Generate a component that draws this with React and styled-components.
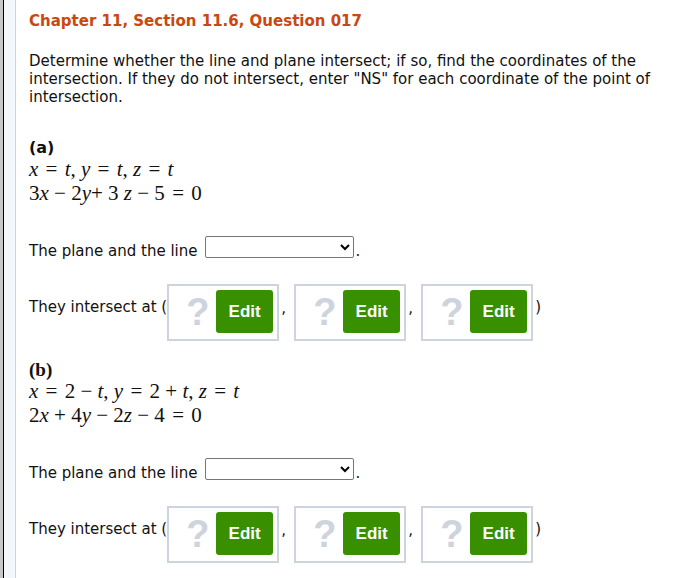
import styled, { createGlobalStyle } from "styled-components"

const Global = createGlobalStyle`
    html, body {
        margin: 0;
        padding: 0;
        background: #ffffff;
    }
`

const Shell = styled.div`
    display: flex;
    min-height: 578px;
`

const Gutter = styled.div`
    width: 3px;
    background: #c8c8c8;
    border-right: 1px solid #000000;
`

const Rail = styled.div`
    width: 11px;
    background: #f3f6fb;
    border-right: 1px solid #ccd3e3;
`

const Content = styled.div`
    flex: 1;
    padding: 12px 0 0 13px;
    font-family: "DejaVu Sans", Verdana, sans-serif;
    font-size: 15px;
    color: #111111;
`

const Title = styled.h1`
    margin: 0;
    font-size: 15px;
    line-height: 18px;
    font-weight: bold;
    color: #c9480f;
`

const Prompt = styled.p`
    margin: 22px 0 0;
    line-height: 18px;
`

const Part = styled.section`
    margin-top: ${({$gap}) => $gap}px;
`

const PartLabel = styled.div`
    font-family: ${({$serif}) => ($serif ? `"Liberation Serif", "Times New Roman", serif` : `"DejaVu Sans", Verdana, sans-serif`)};
    font-size: ${({$serif}) => ($serif ? "19px" : "16px")};
    font-weight: bold;
    line-height: 18px;
`

const MathLine = styled.div`
    font-family: "Liberation Serif", "Times New Roman", serif;
    font-size: 21px;
    line-height: 24px;
    white-space: pre;
`

const V = styled.i`
    font-style: italic;
`

const Eq = styled.span`
    margin: 0 2px;
`

const SelectRow = styled.div`
    margin-top: 31px;
    line-height: 18px;
    display: flex;
    align-items: flex-end;
`

const Choice = styled.select`
    width: 149px;
    height: 22px;
    margin: 0 0 2px 7px;
    font-size: 13px;
    border: 1px solid #767676;
    border-radius: 2px;
    background: #ffffff;
`

const Dot = styled.span`
    margin-left: 2px;
`

const AnswerRow = styled.div`
    margin-top: 24px;
    display: flex;
    align-items: center;

    & > * {
        flex-shrink: 0;
    }
`

const Inline = styled.span`
    margin-bottom: 11px;
    white-space: pre;
`

const AnswerBox = styled.div`
    box-sizing: border-box;
    width: 112px;
    height: 57px;
    border: 2px solid #cdd4df;
    display: flex;
    align-items: center;
    justify-content: space-between;
    padding: 0 4px 2px 17px;
`

const Unknown = styled.span`
    font-family: "Liberation Sans", Arial, sans-serif;
    font-weight: bold;
    font-size: 38px;
    line-height: 38px;
    color: #cdd4de;
`

const EditButton = styled.button`
    width: 57px;
    height: 43px;
    border: none;
    border-radius: 3px;
    background: #388f00;
    color: #ffffff;
    font-family: "Liberation Sans", Arial, sans-serif;
    font-weight: bold;
    font-size: 17px;
    padding: 0;
`

const Comma = styled(Inline)`
    width: 15px;
    padding-left: 2px;
    box-sizing: border-box;
    margin-bottom: 9px;
`

const Paren = styled(Inline)`
    padding-left: 2px;
`

const Answer = () => (
    <AnswerBox>
        <Unknown>?</Unknown>
        <EditButton>Edit</EditButton>
    </AnswerBox>
)

const QuestionPart = ({ label, serif, line, plane, gap }) => (
    <Part $gap={gap}>
        <PartLabel $serif={serif}>{label}</PartLabel>
        <MathLine>{line}</MathLine>
        <MathLine>{plane}</MathLine>
        <SelectRow>
            <span>The plane and the line</span>
            <Choice defaultValue="">
                <option value=""></option>
                <option value="i">intersect</option>
                <option value="n">do not intersect</option>
            </Choice>
            <Dot>.</Dot>
        </SelectRow>
        <AnswerRow>
            <Inline>They intersect at (</Inline>
            <Answer />
            <Comma>,</Comma>
            <Answer />
            <Comma>,</Comma>
            <Answer />
            <Paren>)</Paren>
        </AnswerRow>
    </Part>
)

export default function App() {
    return (
        <Shell>
            <Global />
            <Gutter />
            <Rail />
            <Content>
                <Title>Chapter 11, Section 11.6, Question 017</Title>
                <Prompt>
                    Determine whether the line and plane intersect; if so, find the coordinates of the
                    intersection. If they do not intersect, enter "NS" for each coordinate of the point of
                    intersection.
                </Prompt>
                <QuestionPart
                    gap={33}
                    label="(a)"
                    line={<><V>x</V> <Eq>=</Eq> <V>t</V>, <V>y</V> <Eq>=</Eq> <V>t</V>, <V>z</V> <Eq>=</Eq> <V>t</V></>}
                    plane={<>3<V>x</V> − 2<V>y</V>+ 3 <V>z</V> − 5 <Eq>=</Eq> 0</>}
                />
                <QuestionPart
                    gap={20}
                    serif
                    label="(b)"
                    line={<><V>x</V> <Eq>=</Eq> 2 − <V>t</V>, <V>y</V> <Eq>=</Eq> 2 + <V>t</V>, <V>z</V> <Eq>=</Eq> <V>t</V></>}
                    plane={<>2<V>x</V> + 4<V>y</V> − 2<V>z</V> − 4 <Eq>=</Eq> 0</>}
                />
            </Content>
        </Shell>
    )
}
